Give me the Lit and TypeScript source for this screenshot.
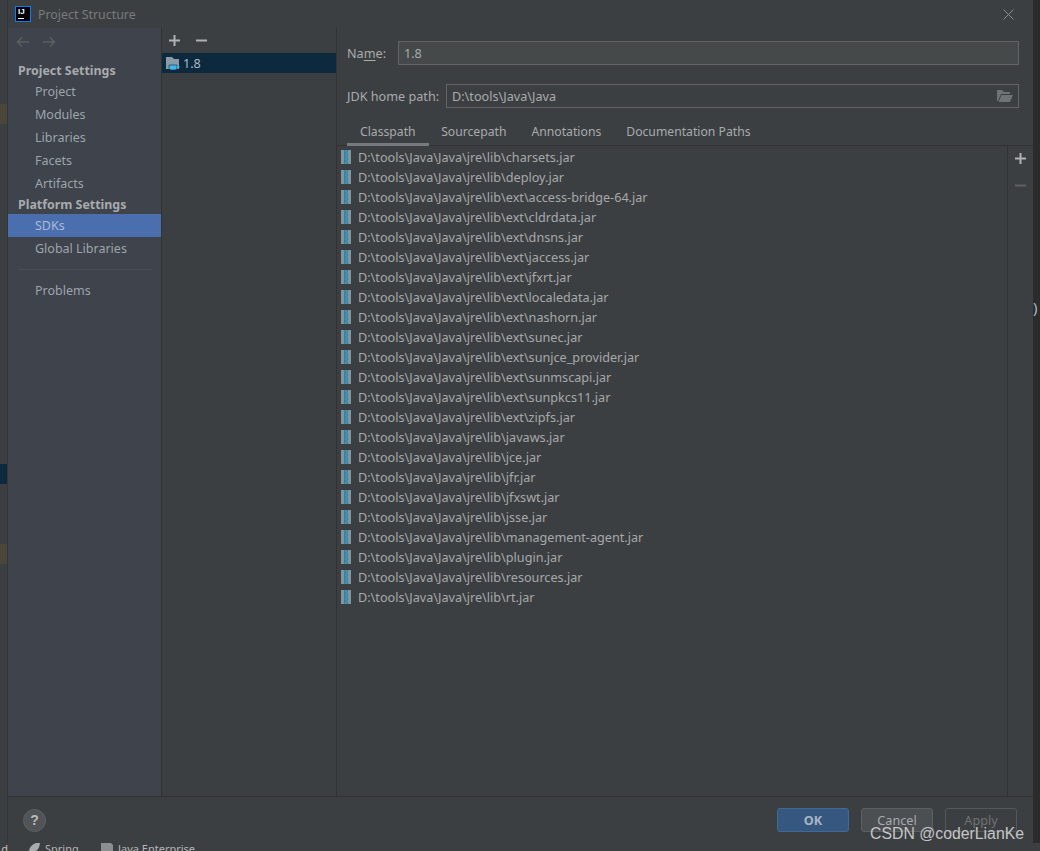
import { LitElement, html, css, svg } from "lit";
import { customElement } from "lit/decorators.js";

const JARS = ["charsets.jar","deploy.jar","ext\\access-bridge-64.jar","ext\\cldrdata.jar","ext\\dnsns.jar","ext\\jaccess.jar","ext\\jfxrt.jar","ext\\localedata.jar","ext\\nashorn.jar","ext\\sunec.jar","ext\\sunjce_provider.jar","ext\\sunmscapi.jar","ext\\sunpkcs11.jar","ext\\zipfs.jar","javaws.jar","jce.jar","jfr.jar","jfxswt.jar","jsse.jar","management-agent.jar","plugin.jar","resources.jar","rt.jar"];

const jarIcon = svg`<svg class="jar" width="10" height="14" viewBox="0 0 10 14"><rect width="10" height="14" fill="#84949d"/><rect x="3" width="4" height="14" fill="#3a7f9c"/><path d="M4 1h2M5 3h2M4 5h2M5 7h2M4 9h2M5 11h2M4 13h2" stroke="#3fa9d4" stroke-width="1"/></svg>`;

@customElement("app-root")
export class AppRoot extends LitElement {
  static styles = css`
    :host { display: block; width: 1040px; height: 851px; overflow: hidden; background: #2b2b2b; font-family: "Noto Sans", "Open Sans", sans-serif; font-size: 12.65px; color: #b3b6b8; }
    .screen { display: grid; grid-template-columns: 8px 1025px 7px; grid-template-rows: 843px 8px; width: 1040px; height: 851px; }
    .edge-left { background: #3c3f41; border-right: 1px solid #333537; box-sizing: border-box; display: flex; flex-direction: column; }
    .edge-left i { display: block; flex: none; }
    .e1 { height: 104px; }
    .e2 { height: 20px; background: #4a4639; }
    .e3 { height: 340px; }
    .e4 { height: 20px; background: #0d293e; }
    .e5 { height: 60px; }
    .e6 { height: 20px; background: #4a4639; }
    .edge-right { background: #2b2b2b; display: flex; flex-direction: column; align-items: flex-start; }
    .paren { margin-top: 297px; font-size: 15px; line-height: 20px; color: #a9b7c6; }
    .taskbar { grid-column: 1 / 4; background: #3c3f41; display: flex; align-items: flex-start; height: 8px; overflow: hidden; font-size: 11px; line-height: 14px; color: #b3b6b8; }
    .taskbar span { display: flex; gap: 5px; align-items: flex-start; margin-top: -1px; white-space: nowrap; }
    .taskbar .d { width: 8px; justify-content: flex-end; color: #c8bcae; }
    .taskbar .spring { margin-left: 20px; width: 73px; }
    .dialog { background: #3c3f41; display: flex; flex-direction: column; min-width: 0; }
    .title { height: 28px; display: flex; align-items: center; box-sizing: border-box; padding: 0 19px 0 7px; color: #787b7d; flex: none; font-size: 12.4px; }
    .logo { width: 16px; height: 16px; box-sizing: border-box; border: 1px solid #087cfa; background: #000; color: #fff; font: bold 8px/8px "Liberation Sans", sans-serif; margin-right: 7px; padding: 1px 0 0 2px; position: relative; flex: none; }
    .logo::after { content: ""; position: absolute; left: 2px; bottom: 2px; width: 6px; height: 1px; background: #fff; }
    .close { margin-left: auto; }
    .main { flex: 1; display: flex; min-height: 0; border-bottom: 1px solid #323232; }
    .sidebar { width: 153px; background: #3e434c; border-right: 1px solid #323232; flex: none; display: flex; flex-direction: column; font-size: 12.5px; }
    .nav { height: 28px; display: flex; align-items: center; gap: 14px; padding-left: 8px; flex: none; }
    .group { height: 21px; line-height: 21px; padding-left: 10px; font-weight: 700; font-size: 12.4px; color: #a8abad; flex: none; white-space: nowrap; }
    .group.first { margin-top: 4px; margin-bottom: -1px; }
    .group.second { margin-top: -2px; line-height: 23px; }
    .item { height: 23px; line-height: 23px; padding-left: 27px; color: #9da5ab; flex: none; }
    .item.sel { background: #4b6eaf; color: #a9bcd5; }
    .sep { height: 1px; background: #4b4f55; margin: 9px 10px; flex: none; }
    .sdk { width: 174px; border-right: 1px solid #323232; flex: none; display: flex; flex-direction: column; }
    .tools { height: 25px; display: flex; align-items: center; gap: 16px; padding-left: 7px; flex: none; }
    .sdk-row { height: 20px; background: #0d293e; display: flex; align-items: center; gap: 2px; padding-left: 3px; color: #a9bac6; flex: none; }
    .detail { flex: 1; display: flex; flex-direction: column; min-width: 0; }
    .field { display: flex; align-items: center; flex: none; padding: 0 14px 0 10px; }
    .field.name { margin-top: 13px; height: 24px; }
    .field.home { margin-top: 19px; height: 24px; }
    .field label { color: #a8abad; white-space: nowrap; }
    .field.name label { width: 51px; }
    .field.home label { width: 99px; }
    .field u { text-decoration-thickness: 1px; text-underline-offset: 2px; }
    .input { flex: 1; height: 24px; box-sizing: border-box; border: 1px solid #646464; padding: 0 5px; line-height: 21px; color: #a8abad; display: flex; align-items: center; justify-content: space-between; }
    .field.name .input { background: #45494a; }
    .tabs { display: flex; height: 29px; margin-top: 8px; padding-left: 10px; border-bottom: 1px solid #323232; flex: none; font-size: 12.2px; }
    .tab { padding: 0 12.5px; line-height: 32px; color: #a8abad; box-sizing: border-box; height: 30px; white-space: nowrap; }
    .tab.on { border-bottom: 3px solid #747a80; padding: 0 13px; }
    .split { flex: 1; display: flex; min-height: 0; }
    .list { flex: 1; padding-top: 1px; }
    .row { height: 20px; display: flex; align-items: center; padding-left: 4px; gap: 7px; color: #a6a9ab; white-space: nowrap; }
    .jar { flex: none; }
    .side { width: 26px; border-left: 1px solid #323232; flex: none; box-sizing: border-box; display: flex; flex-direction: column; align-items: center; gap: 16px; padding-top: 7px; }
    .footer { height: 46px; flex: none; display: flex; align-items: center; padding: 0 16px 0 15px; gap: 12px; position: relative; }
    .help { width: 23px; height: 23px; border-radius: 50%; background: #515456; border: 1px solid #5e6163; box-sizing: border-box; color: #bbb; font: bold 14px/21px "Liberation Sans", sans-serif; text-align: center; margin-right: auto; }
    .btn { width: 72px; height: 24px; box-sizing: border-box; border-radius: 3px; border: 1px solid #5e6060; text-align: center; line-height: 22px; color: #a8abad; }
    .btn.ok { background: #365880; border-color: #3f6a96; font-weight: 700; color: #a8b4c2; }
    .btn.cancel { background: #4b4f51; }
    .btn.apply { background: transparent; border-color: #55585a; color: #6f7274; }
    .mark { position: absolute; right: 9px; bottom: 0; font: 15.8px/18px "Liberation Sans", sans-serif; color: #c4c6c7; white-space: nowrap; }
  `;

  render() {
    const plus = (c: string) => html`<svg width="11" height="11" viewBox="0 0 11 11"><path d="M5.5 0v11M0 5.5h11" stroke="${c}" stroke-width="2"/></svg>`;
    const minus = (c: string) => html`<svg width="11" height="11" viewBox="0 0 11 11"><path d="M0 5.5h11" stroke="${c}" stroke-width="2"/></svg>`;
    return html`<div class="screen">
      <div class="edge-left"><i class="e1"></i><i class="e2"></i><i class="e3"></i><i class="e4"></i><i class="e5"></i><i class="e6"></i></div>
      <div class="dialog">
        <div class="title">
          <div class="logo">IJ</div>Project Structure
          <svg class="close" width="11" height="11" viewBox="0 0 11 11"><path d="M.5.5l10 10M10.500.5l-10 10" stroke="#8a8d8f" stroke-width="1"/></svg>
        </div>
        <div class="main">
          <div class="sidebar">
            <div class="nav">
              <svg width="13" height="12" viewBox="0 0 13 12"><path d="M13 6H1.500M6 1.500L1.500 6 6 10.500" fill="none" stroke="#5c5f61" stroke-width="1.600"/></svg>
              <svg width="13" height="12" viewBox="0 0 13 12"><path d="M0 6h11.500M7 1.500L11.500 6 7 10.500" fill="none" stroke="#5c5f61" stroke-width="1.600"/></svg>
            </div>
            <div class="group first">Project Settings</div>
            <div class="item">Project</div><div class="item">Modules</div><div class="item">Libraries</div><div class="item">Facets</div><div class="item">Artifacts</div>
            <div class="group second">Platform Settings</div>
            <div class="item sel">SDKs</div><div class="item">Global Libraries</div>
            <div class="sep"></div>
            <div class="item">Problems</div>
          </div>
          <div class="sdk">
            <div class="tools">${plus("#afb1b3")}${minus("#afb1b3")}</div>
            <div class="sdk-row">
              <svg width="16" height="15" viewBox="0 0 16 15"><path d="M1 1h6l2 2h5v10H1z" fill="#8a9ba8"/><path d="M4 9h8v3a2 2 0 0 1-2 2H6a2 2 0 0 1-2-2z" fill="#3fb5e8" stroke="#0d293e" stroke-width=".6"/><path d="M12 10h2v1.500h-2" fill="none" stroke="#3fb5e8"/></svg>
              1.8
            </div>
          </div>
          <div class="detail">
            <div class="field name"><label>Na<u>m</u>e:</label><div class="input">1.8</div></div>
            <div class="field home"><label>JDK home path:</label><div class="input">D:\\tools\\Java\\Java
              <svg width="16" height="12" viewBox="0 0 16 12"><path d="M0 0h5l2 2h6v2H4L1 11H0z" fill="#6e7375"/><path d="M4.500 5H16l-3 7H1.500z" fill="#6e7375"/></svg></div></div>
            <div class="tabs"><div class="tab on">Classpath</div><div class="tab">Sourcepath</div><div class="tab">Annotations</div><div class="tab">Documentation Paths</div></div>
            <div class="split">
              <div class="list">${JARS.map((j) => html`<div class="row">${jarIcon}<span>D:\\tools\\Java\\Java\\jre\\lib\\${j}</span></div>`)}</div>
              <div class="side">${plus("#afb1b3")}${minus("#5e6163")}</div>
            </div>
          </div>
        </div>
        <div class="footer">
          <div class="help">?</div>
          <div class="btn ok">OK</div><div class="btn cancel">Cancel</div><div class="btn apply">Apply</div>
          <div class="mark">CSDN @coderLianKe</div>
        </div>
      </div>
      <div class="edge-right"><span class="paren">)</span></div>
      <div class="taskbar"><span class="d">d</span><span class="spring">
        <svg width="12" height="10" viewBox="0 0 12 10"><path d="M1 10C1 4 6 1 12 0c0 6-3 10-8 10z" fill="#a8abad"/></svg>Spring</span>
        <span><svg width="12" height="10" viewBox="0 0 12 10"><path d="M0 0h9l3 3v7H0z" fill="#8c8f91"/></svg>Java Enterprise</span></div>
    </div>`;
  }
}
